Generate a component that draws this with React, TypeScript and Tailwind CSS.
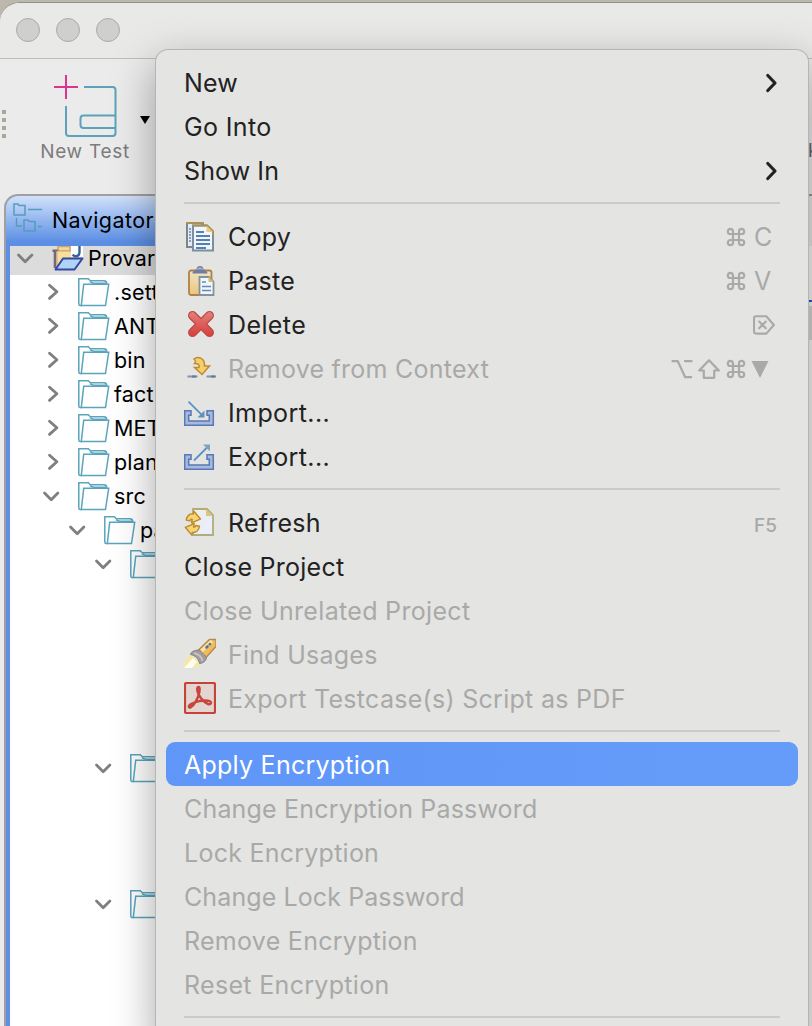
import React from 'react'

// ─── DATA ─────────────────────────────────────────────────────────────────────
interface TreeNode {
  label: string
  level: number
  open?: boolean
  project?: boolean
  gap?: string
}

const treeData: TreeNode[] = [
  { label: 'Provar', level: 0, open: true, project: true },
  { label: '.sett', level: 1 },
  { label: 'ANT', level: 1 },
  { label: 'bin', level: 1 },
  { label: 'fact', level: 1 },
  { label: 'MET', level: 1 },
  { label: 'plan', level: 1 },
  { label: 'src', level: 1, open: true },
  { label: 'pa', level: 2, open: true },
  { label: '', level: 3, open: true },
  { label: '', level: 3, open: true, gap: 'mt-[170px]' },
  { label: '', level: 3, open: true, gap: 'mt-[102px]' },
]

const indents = ['pl-[4px]', 'pl-[30px]', 'pl-[56px]', 'pl-[82px]']

interface MenuItem {
  label: string
  icon?: React.ReactNode
  shortcut?: React.ReactNode
  submenu?: boolean
  disabled?: boolean
  active?: boolean
  tracking?: string
}

// ─── ICONS ────────────────────────────────────────────────────────────────────
const iconClass = 'w-8 h-8 shrink-0 mr-3'

const CopyIcon = () => (
  <svg viewBox="0 0 32 32" className={iconClass}>
    <path d="M3 3h15v24H3z" fill="#e3ebf3" stroke="#7e868c" strokeWidth="2" />
    <path d="M2 3h17v2" fill="none" stroke="#a8925a" strokeWidth="2" />
    <path d="M5 9h2M5 12h2M5 15h2M5 18h2M5 21h2" stroke="#5f87b5" strokeWidth="1.6" />
    <path d="M9 5.500h14l6 6v19H9z" fill="#f1f6fc" stroke="#7b8ea2" strokeWidth="2" />
    <path d="M8 5.500h15l6 6V15" fill="none" stroke="#a8925a" strokeWidth="2" />
    <path d="M22.500 5.500V12H29z" fill="#e8cb7c" />
    <path d="M12 12h8M12 16h14M12 20h14M12 24h14M12 28h10" stroke="#5680b3" strokeWidth="1.900" />
  </svg>
)

const PasteIcon = () => (
  <svg viewBox="0 0 32 32" className={iconClass}>
    <defs>
      <linearGradient id="board" x1="0" y1="0" x2="0" y2="1">
        <stop offset="0" stopColor="#f0e3c6" />
        <stop offset="1" stopColor="#ebc57c" />
      </linearGradient>
    </defs>
    <rect x="5" y="6.500" width="22.500" height="24.500" rx="2" fill="url(#board)" stroke="#b08045" strokeWidth="1.800" />
    <path d="M8.500 9.500c0-3 3-3 4-4 0-2 1-3.500 3.500-3.500s3.500 1.500 3.500 3.500c1 1 4 1 4 4z" fill="#717d9f" />
    <path d="M13 5.500c0-3 6-3 6 0z" fill="#a5aec2" />
    <path d="M15.500 13H25l4.500 4.500V31h-14z" fill="#f1f6fc" stroke="#83929d" strokeWidth="1.800" />
    <path d="M24.500 12.500v5.500H30z" fill="#d7b765" />
    <path d="M18 18h4M18 22.500h9M18 26.500h9" stroke="#6289b8" strokeWidth="1.700" />
  </svg>
)

const DeleteIcon = () => (
  <svg viewBox="0 0 32 32" className={iconClass}>
    <defs>
      <linearGradient id="cross" x1="0" y1="0" x2="0" y2="32" gradientUnits="userSpaceOnUse">
        <stop offset="0.100" stopColor="#e3817a" />
        <stop offset="0.900" stopColor="#d93b3b" />
      </linearGradient>
    </defs>
    <path d="M8.500 7.500l17 17M25.500 7.500l-17 17" stroke="#b94b45" strokeWidth="9" strokeLinecap="round" />
    <path d="M8.500 7.500l17 17M25.500 7.500l-17 17" stroke="url(#cross)" strokeWidth="6.600" strokeLinecap="round" />
  </svg>
)

const RemoveContextIcon = () => (
  <svg viewBox="0 0 32 32" className={iconClass}>
    <path d="M10 7c4-3 10-1 10.500 5v2h5L18 22.500 10.500 15.500H15c1-3-1-4-4.500-4 2-2 1-3-.5-4.500z" fill="#f5cf6c" stroke="#c08a32" strokeWidth="1.500" />
    <path d="M3.500 24.500h10M22.500 24.500H32" stroke="#8591aa" strokeWidth="2" />
    <path d="M8 24.500h4M27 24.500h4" stroke="#68779a" strokeWidth="2" />
  </svg>
)

const Tray = () => (
  <path
    d="M.700 14.700H7v4.600H4.700V25h20.600v-5.700H23v-4.600h6.300v14.600H.700z"
    fill="#a7b9dc"
    stroke="#5978b4"
    strokeWidth="1.500"
  />
)

const ImportIcon = () => (
  <svg viewBox="0 0 32 32" className={iconClass}>
    <Tray />
    <path d="M4.500 5.700l13 13" stroke="#5a92c4" strokeWidth="1.800" />
    <path d="M20.500 14.500v7h-7z" fill="#5f93bd" />
  </svg>
)

const ExportIcon = () => (
  <svg viewBox="0 0 32 32" className={iconClass}>
    <Tray />
    <path d="M10 20.500l13-13" stroke="#5a92c4" strokeWidth="1.800" />
    <path d="M19 4.500h7v7z" fill="#7fa5be" />
  </svg>
)

const RefreshIcon = () => (
  <svg viewBox="0 0 32 32" className={iconClass}>
    <defs>
      <linearGradient id="page" x1="0" y1="0" x2="1" y2="1">
        <stop offset="0" stopColor="#f5f0dc" />
        <stop offset="0.600" stopColor="#e8eefa" />
      </linearGradient>
    </defs>
    <path d="M9 3h14l6 6v20H9z" fill="url(#page)" stroke="#b2ab7c" strokeWidth="1.800" />
    <path d="M22 3v7h7z" fill="#d9c681" />
    <path d="M2.800 15.500C2.500 11 5 8 8.500 8V5.200l8 6.300-8 5.500v-3.500c-1.500 0-2 .8-2 2z" fill="#f7d473" stroke="#bd8a2c" strokeWidth="1.400" strokeLinejoin="round" transform="rotate(12 9 12)" />
    <path d="M2.800 15.500C2.500 11 5 8 8.500 8V5.200l8 6.300-8 5.500v-3.500c-1.500 0-2 .8-2 2z" fill="#f7d473" stroke="#bd8a2c" strokeWidth="1.400" strokeLinejoin="round" transform="rotate(192 9.400 17.200)" />
  </svg>
)

const FindIcon = () => (
  <svg viewBox="0 0 32 32" className={iconClass}>
    <path d="M0 24L7 16l9 9-4 5H0z" fill="#f6e8a3" />
    <path d="M0 30l9-10 4 4-5 6z" fill="#fffef2" />
    <path d="M13.500 13L25.500 1.500H32v7L21.500 20z" fill="#efbb60" stroke="#b28a4a" strokeWidth="1.400" />
    <path d="M17.500 13L28 3" stroke="#fbe2a6" strokeWidth="3.500" />
    <path d="M6.500 16.500C7 13 12 12 15.500 12l7 7c0 4-3 6-7 6.500-1-5-4-8-9-9z" fill="#a39c9e" stroke="#8b8180" strokeWidth="1" />
    <path d="M10 15c4 1 8 4 8.500 8" fill="none" stroke="#c7c2c6" strokeWidth="2" />
    <path d="M22.500 9.500l3.500-3.500" stroke="#4f7894" strokeWidth="2.500" strokeLinecap="round" strokeDasharray="1.500 3" />
  </svg>
)

const PdfIcon = () => (
  <svg viewBox="0 0 32 32" className={iconClass}>
    <rect x="1" y="1" width="30" height="30" rx="1.500" fill="#e3d5d2" stroke="#c5443a" strokeWidth="2.200" />
    <path
      d="M13.500 5.500c1.500-1.500 3 0 1.800 5-1 5-4.500 12.500-8.800 15-2 .5-2.500-1.500 0-3.200 4.500-2.800 13-4.500 18-3.500 4 1 3 4-.5 3.200-4.500-1.500-10-8.500-10.700-13.500-.2-1.500-.2-2.500.2-3z"
      fill="none"
      stroke="#c8453b"
      strokeWidth="2.400"
    />
  </svg>
)

const CommandGlyph = () => (
  <svg viewBox="0 0 20 20" className="w-5 h-5" fill="none" stroke="currentColor" strokeWidth="2.200">
    <path d="M7 7V4.400A2.600 2.600 0 1 0 4.400 7h11.200A2.600 2.600 0 1 0 13 4.400v11.200a2.600 2.600 0 1 0 2.600-2.600H4.400a2.600 2.600 0 1 0 2.600 2.600z" />
  </svg>
)

const OptionGlyph = () => (
  <svg viewBox="0 0 22 20" className="w-[22px] h-5" fill="none" stroke="currentColor" strokeWidth="2.200" strokeLinecap="round" strokeLinejoin="round">
    <path d="M1.500 2.200h5.300l7.400 16h6M14 2.200h6.500" />
  </svg>
)

const ShiftGlyph = () => (
  <svg viewBox="0 0 22 20" className="w-[22px] h-5" fill="none" stroke="currentColor" strokeWidth="2.200" strokeLinejoin="round">
    <path d="M11 1.200l9.800 10.300h-4.600v7.300H5.800v-7.300H1.200z" />
  </svg>
)

const ForwardDeleteGlyph = () => (
  <svg viewBox="0 0 22 20" className="w-[22px] h-5" fill="none" stroke="currentColor" strokeWidth="2.100" strokeLinecap="round" strokeLinejoin="round">
    <path d="M3 1.200h10.300L20.900 10l-7.600 8.600H3q-2 0-2-2V3.200q0-2 2-2z" />
    <path d="M6.200 6.500l6.600 6.800M12.800 6.500l-6.600 6.800" />
  </svg>
)

const FolderIcon = () => (
  <svg viewBox="0 0 32 32" className="w-8 h-8 shrink-0" fill="none" stroke="#5aa5bd" strokeWidth="1.500">
    <path d="M4 29.500H2Q.800 29.500.800 28V2.700h9.500l2 2H26q2.800.3 2.800 3" />
    <path d="M12 5.700q2 1.500 4 1.500h12.500" />
    <path d="M5.700 8.300h25L27.500 29.500H3.300z" fill="#fff" />
  </svg>
)

const ProjectIcon = () => (
  <svg viewBox="0 0 32 32" className="w-8 h-8 shrink-0">
    <path d="M6 9V4.500h12V9z" fill="#eed9a4" stroke="#d0a668" strokeWidth="1.500" />
    <path d="M.500 8.800h6M3 9v17" stroke="#76677c" strokeWidth="2.600" />
    <path d="M5 9h21v8H11L5 26z" fill="#f8dfa0" stroke="#d2a661" strokeWidth="1" />
    <path d="M19 3h12v12H19z" fill="#fff" />
    <path d="M27.500 3v7q0 4.200-4 4.200-2 0-2.800-1.700" fill="none" stroke="#356391" strokeWidth="2.400" />
    <path d="M11 16.500h19.500L22.500 27.500H3.500z" fill="#aed5f7" stroke="#3547a5" strokeWidth="2" strokeLinejoin="round" />
  </svg>
)

const TreeChevron = ({ open }: { open?: boolean }) => (
  <svg viewBox="0 0 20 20" className="w-5 h-5 shrink-0" fill="none" stroke="#7f7f7f" strokeWidth="2.800" strokeLinecap="round" strokeLinejoin="round">
    {open ? <path d="M4.500 7l6.700 6.700L17.900 7" /> : <path d="M9.500 3.200l7.400 6.600-7.400 6.600" />}
  </svg>
)

// ─── MENU DATA ────────────────────────────────────────────────────────────────
const keyClass = 'w-[34px] pl-[8px] pt-[2px]'

const menuGroups: MenuItem[][] = [
  [
    { label: 'New', submenu: true, tracking: 'tracking-[0.100px]' },
    { label: 'Go Into', tracking: 'tracking-[0.350px]' },
    { label: 'Show In', submenu: true, tracking: 'tracking-[0.100px]' },
  ],
  [
    { label: 'Copy', icon: <CopyIcon />, shortcut: <><CommandGlyph /><span className={keyClass}>C</span></> },
    { label: 'Paste', icon: <PasteIcon />, shortcut: <><CommandGlyph /><span className={keyClass}>V</span></> },
    { label: 'Delete', icon: <DeleteIcon />, tracking: 'tracking-[0.400px]', shortcut: <span className="pr-[5px]"><ForwardDeleteGlyph /></span> },
    {
      label: 'Remove from Context',
      icon: <RemoveContextIcon />,
      disabled: true,
      shortcut: (
        <>
          <OptionGlyph />
          <span className="pl-[5px] pr-[6px]"><ShiftGlyph /></span>
          <CommandGlyph />
          <svg viewBox="0 0 34 20" className="w-[34px] h-5" fill="currentColor"><path d="M5.500 2h17L14 19z" /></svg>
        </>
      ),
    },
    { label: 'Import...', icon: <ImportIcon />, tracking: 'tracking-[0.400px]' },
    { label: 'Export...', icon: <ExportIcon />, tracking: 'tracking-[0.400px]' },
  ],
  [
    { label: 'Refresh', icon: <RefreshIcon />, shortcut: <span className="text-[19px] font-medium pr-[3px] pt-[5px]">F5</span> },
    { label: 'Close Project' },
    { label: 'Close Unrelated Project', disabled: true, tracking: 'tracking-[0.320px]' },
    { label: 'Find Usages', icon: <FindIcon />, disabled: true },
    { label: 'Export Testcase(s) Script as PDF', icon: <PdfIcon />, disabled: true, tracking: 'tracking-[0.290px]' },
  ],
  [
    { label: 'Apply Encryption', active: true },
    { label: 'Change Encryption Password', disabled: true, tracking: 'tracking-[0.180px]' },
    { label: 'Lock Encryption', disabled: true },
    { label: 'Change Lock Password', disabled: true, tracking: 'tracking-[0.100px]' },
    { label: 'Remove Encryption', disabled: true, tracking: 'tracking-[0.280px]' },
    { label: 'Reset Encryption', disabled: true, tracking: 'tracking-[0.320px]' },
  ],
]

const MenuRow = ({ item }: { item: MenuItem }) => {
  const color = item.active
    ? 'bg-linear-to-r from-[#5f96f8] to-[#669cf9] text-white'
    : item.disabled ? 'text-[#a9a9a8]' : 'text-[#222222]'
  return (
    <div className={`h-11 flex items-center px-[18px] rounded-[9px] ${color}`}>
      {item.icon}
      <span className={`pt-[2px] whitespace-nowrap ${item.tracking ?? 'tracking-[0.250px]'}`}>{item.label}</span>
      {item.shortcut && <div className="ml-auto flex items-center pt-px text-[#a9a9a8]">{item.shortcut}</div>}
      {item.submenu && (
        <svg viewBox="0 0 16 22" className="ml-auto w-4 h-[22px]" fill="none" stroke="#222" strokeWidth="3.200" strokeLinecap="round" strokeLinejoin="round">
          <path d="M3.800 4.500l7.200 7.500-7.200 7.500" />
        </svg>
      )}
    </div>
  )
}

const ContextMenu = () => (
  <div className="absolute left-[156px] top-[50px] w-[652px] h-[1000px] rounded-[12px] bg-[#e4e4e2] p-[10px] text-[25px] leading-none shadow-[0_0_0_1px_#b5b5b4,0_14px_44px_rgba(0,0,0,0.36)]">
    {menuGroups.map((group, i) => (
      <div key={i}>
        {group.map((item) => <MenuRow key={item.label} item={item} />)}
        <div className="mx-[18px] my-[10px] h-[2px] bg-[#cbcbca]" />
      </div>
    ))}
  </div>
)

// ─── WINDOW BEHIND THE MENU ───────────────────────────────────────────────────
const Toolbar = () => (
  <div className="h-[135px] flex pt-[15px] pl-[2px]">
    <div className="flex flex-col gap-1 pt-[36px]">
      {[0, 1, 2, 3].map((n) => <div key={n} className="w-1 h-1 bg-[#aaa798]" />)}
    </div>
    <div className="w-[94px] ml-[32px] flex flex-col items-center">
      <svg viewBox="0 0 66 66" className="w-[66px] h-[66px] ml-[3px]" fill="none" stroke="#5aa3ba" strokeWidth="2">
        <path d="M30 13h28.500q3 0 3 3v43q0 3-3 3h-43.500q-3 0-3-3V32" />
        <path d="M61.500 41.500h-32q-3 0-3 3v6.500q0 3 3 3h32" />
        <path d="M12 1v24M0 13h24" stroke="#dc358f" />
      </svg>
      <p className="text-[19px] leading-6 tracking-[0.700px] text-[#7c7c7c] whitespace-nowrap">New Test</p>
    </div>
    <svg viewBox="0 0 10 8" className="w-[10px] h-2 mt-[42px] ml-2"><path d="M0 0h10L5 8z" /></svg>
  </div>
)

const Navigator = () => (
  <div className="w-[200px] ml-1 flex-1 border-l-2 border-t-2 border-[#a0a0a0] rounded-tl-[14px] overflow-hidden flex flex-col bg-[#5d8fe4]">
    <div className="h-[50px] shrink-0 flex pl-[7px] bg-linear-to-b from-[#d2e1fa] to-[#5b8ee4] to-92%">
      <svg viewBox="0 0 30 30" className="w-[30px] h-[30px] mt-[7px]" fill="none" stroke="#559db9" strokeWidth="1.500">
        <path d="M1 1h4l1 1.500h6V12H1zM15 6.500h14M3.500 15v8H9M11 17h4l1 1.500h6V28H11zM25 23.500h4" />
      </svg>
      <span className="ml-[9px] pt-[10px] text-[21.500px] leading-7 tracking-[0.400px]">Navigator</span>
    </div>
    <div className="ml-1 flex-1 bg-white overflow-hidden">
      <div className="-mt-[5px] leading-6">
        {treeData.map((node, i) => (
          <div key={i} className={`h-[34px] flex items-center text-[21.500px] tracking-[0.200px] ${indents[node.level]} ${node.gap ?? ''} ${node.project ? 'bg-[#dcdcdc]' : ''}`}>
            <TreeChevron open={node.open} />
            <span className="ml-[18px] mr-1">{node.project ? <ProjectIcon /> : <FolderIcon />}</span>
            <span className="whitespace-nowrap leading-6">{node.label}</span>
          </div>
        ))}
      </div>
    </div>
  </div>
)

// Editor area, only its right edge sticks out from under the menu
const EditorArea = () => (
  <div className="flex-1 flex flex-col items-end">
    <div className="h-[135px] w-1 pt-[80px] text-[19px] leading-6 text-[#666]">k</div>
    <div className="h-[52px] w-full border-t-2 border-[#999] bg-[#e6e6e6]" />
    <div className="h-[54px] w-full bg-[#f5f5f5]" />
    <div className="h-[2px] w-full bg-[#2857d2]" />
    <div className="h-1 w-full bg-[#f5f5f5]" />
    <div className="h-[34px] w-full bg-[#d5d5d5]" />
    <div className="flex-1 w-full bg-[#f3f3f3]" />
  </div>
)

export default function App() {
  return (
    <div className="relative w-[812px] h-[1026px] overflow-hidden bg-[#bcb9ac] pt-[2px] font-['Inter','Liberation_Sans',sans-serif] text-black">
      <div className="h-[1024px] flex flex-col rounded-tl-[20px] bg-[#ebebeb] border-t border-[#8f8f8b] overflow-hidden">
        <div className="h-14 shrink-0 flex items-center gap-4 pl-4 pb-[2px] bg-[#e9e9e7] border-b border-[#bdbdbb]">
          {[0, 1, 2].map((n) => <div key={n} className="w-6 h-6 rounded-full bg-[#cfcfce] border border-[#aaaaa9]" />)}
        </div>
        <div className="flex-1 flex">
          <div className="w-[200px] flex flex-col">
            <Toolbar />
            <Navigator />
          </div>
          <EditorArea />
        </div>
      </div>
      <ContextMenu />
    </div>
  )
}
